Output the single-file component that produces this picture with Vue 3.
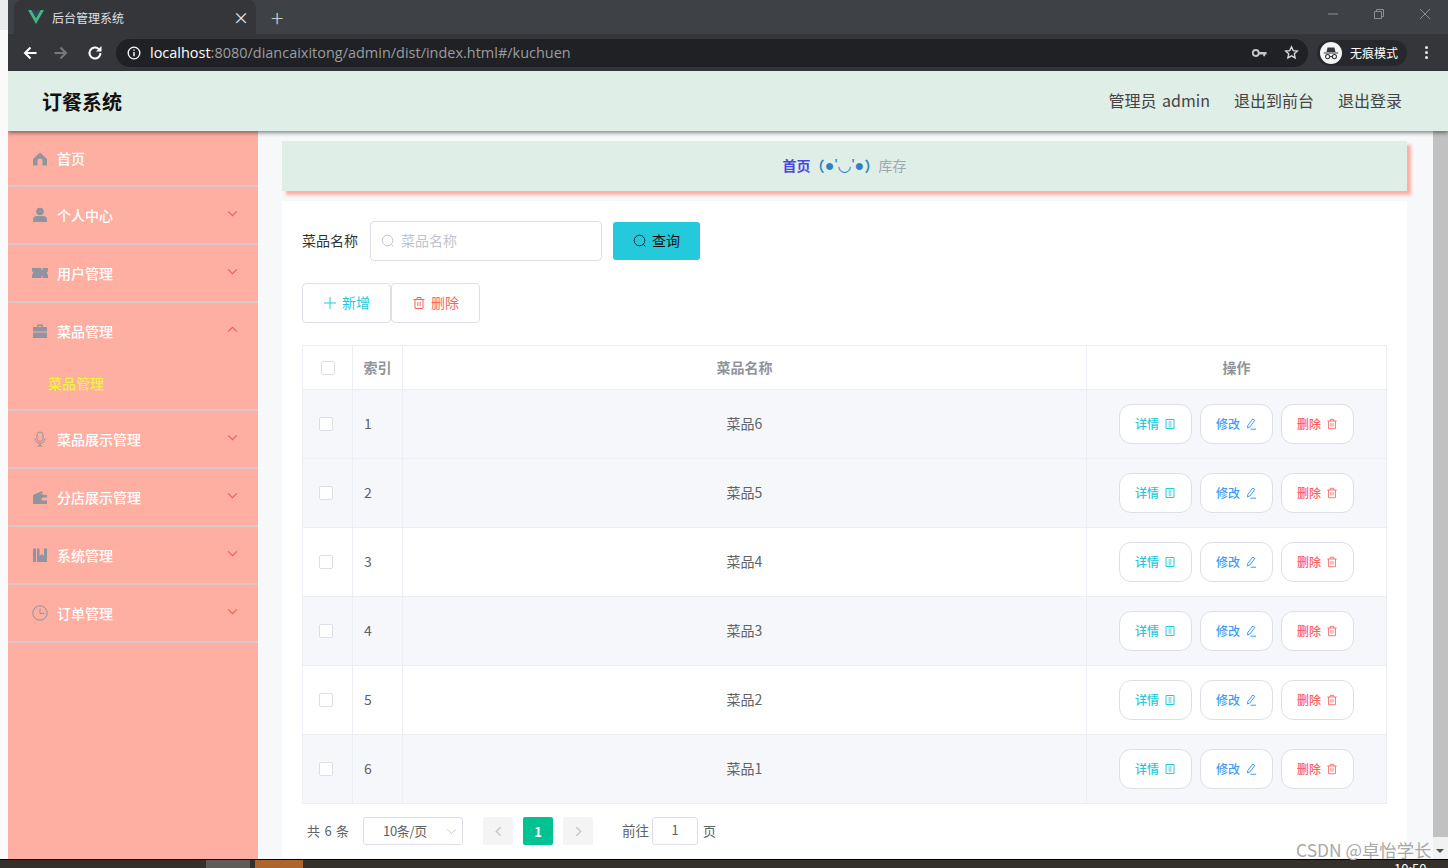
<template>
  <div class="screen">
    <div class="window">
      <!-- browser chrome -->
      <div class="tabstrip">
        <div class="tab">
          <svg class="tab-logo" viewBox="0 0 24 21" width="16" height="14">
            <path d="M0 0h5l7 12L19 0h5L12 21z" fill="#41b883" />
            <path d="M5 0h4.500l2.500 4.500L14.500 0H19l-7 12z" fill="#35495e" />
          </svg>
          <span class="tab-title">后台管理系统</span>
          <span class="tab-close">×</span>
        </div>
        <span class="tab-new">+</span>
        <div class="win-controls">
          <svg viewBox="0 0 12 12" width="12" height="12"><path d="M1 6h10" stroke="#8b8e92" fill="none" /></svg>
          <svg viewBox="0 0 12 12" width="12" height="12"><path d="M1.500 3.500h7v7h-7zM3.500 3.500v-2h7v7h-2" stroke="#8b8e92" fill="none" /></svg>
          <svg viewBox="0 0 12 12" width="12" height="12"><path d="M1 1l10 10M11 1L1 11" stroke="#8b8e92" fill="none" /></svg>
        </div>
      </div>
      <div class="toolbar">
        <svg class="nav-icon" viewBox="0 0 16 16" width="16" height="16"><path d="M14.500 8H3M8.500 2.500L3 8l5.500 5.500" stroke="#fff" stroke-width="2" fill="none" /></svg>
        <svg class="nav-icon" viewBox="0 0 16 16" width="16" height="16"><path d="M1.500 8H13M7.500 2.500L13 8l-5.500 5.500" stroke="#77797c" stroke-width="2" fill="none" /></svg>
        <svg class="nav-icon" viewBox="0 0 16 16" width="16" height="16"><path d="M13.500 8a5.500 5.500 0 1 1-1.600-3.900" stroke="#fff" stroke-width="2" fill="none" /><path d="M14.500 1v5.500H9z" fill="#fff" /></svg>
        <div class="omnibox">
          <svg viewBox="0 0 14 14" width="14" height="14"><circle cx="7" cy="7" r="5.800" stroke="#fff" stroke-width="1.300" fill="none" /><path d="M7 6v4.200M7 3.500v1.300" stroke="#fff" stroke-width="1.400" /></svg>
          <span class="url"><b>localhost</b>:8080/diancaixitong/admin/dist/index.html#/kuchuen</span>
          <svg class="key" viewBox="0 0 16 10" width="15" height="10"><circle cx="4" cy="5" r="3.200" fill="none" stroke="#c4c6c9" stroke-width="2" /><path d="M7 4h8.500v2.500h-1.500v2h-2v-2H7z" fill="#c4c6c9" /></svg>
          <svg class="star" viewBox="0 0 16 16" width="15" height="15"><path d="M8 1.800l1.900 4.100 4.400.5-3.300 3 .9 4.400L8 11.600l-3.900 2.200.9-4.400-3.300-3 4.400-.5z" stroke="#dcdde0" stroke-width="1.400" fill="none" /></svg>
        </div>
        <div class="incognito">
          <span class="incognito-face">
            <svg viewBox="0 0 20 20" width="18" height="18">
              <path d="M2 9.500h16v1H2zM5 9l1.200-5h7.600L15 9z" fill="#33363a" />
              <circle cx="6.200" cy="14" r="2.300" stroke="#33363a" stroke-width="1.200" fill="none" />
              <circle cx="13.800" cy="14" r="2.300" stroke="#33363a" stroke-width="1.200" fill="none" />
              <path d="M8.500 14h3" stroke="#33363a" stroke-width="1.200" />
            </svg>
          </span>
          <span class="incognito-text">无痕模式</span>
        </div>
        <div class="menu-dots"><i></i><i></i><i></i></div>
      </div>

      <!-- app header -->
      <header class="top">
        <div class="brand">订餐系统</div>
        <nav class="top-links">
          <span>管理员 admin</span>
          <span>退出到前台</span>
          <span>退出登录</span>
        </nav>
      </header>

      <div class="body">
        <aside class="side">
          <template v-for="item in menu" :key="item.label">
            <div class="side-item" :class="{ open: item.sub }">
              <div class="side-row">
                <svg class="side-icon" viewBox="0 0 16 16" width="16" height="16" v-html="item.icon"></svg>
                <span>{{ item.label }}</span>
                <svg v-if="item.arrow" class="side-arrow" viewBox="0 0 12 8" width="11" height="7">
                  <path :d="item.sub ? 'M1 6.500l5-5 5 5' : 'M1 1.500l5 5 5-5'" stroke="#f7584e" stroke-width="1.200" fill="none" />
                </svg>
              </div>
              <div v-if="item.sub" class="side-sub">{{ item.sub }}</div>
            </div>
          </template>
        </aside>

        <main class="main">
          <div class="crumb">
            <span class="crumb-home">首页</span>
            <span class="crumb-face">（<span class="face-in">●'◡'●</span>）</span>
            <span class="crumb-cur">库存</span>
          </div>

          <section class="card">
            <div class="search">
              <label>菜品名称</label>
              <div class="search-input">
                <svg viewBox="0 0 14 14" width="14" height="14"><circle cx="6.500" cy="6.500" r="5.300" stroke="#c0c4cc" fill="none" /><path d="M10.500 10.500l2 2" stroke="#c0c4cc" /></svg>
                <span>菜品名称</span>
              </div>
              <button class="search-btn">
                <svg viewBox="0 0 14 14" width="14" height="14"><circle cx="6.500" cy="6.500" r="5.300" stroke="#1b2a35" fill="none" /><path d="M10.500 10.500l2 2" stroke="#1b2a35" /></svg>
                <span>查询</span>
              </button>
            </div>

            <div class="actions">
              <button class="act act-add">
                <svg viewBox="0 0 14 14" width="14" height="14"><path d="M7 1v12M1 7h12" stroke="#25c9dc" fill="none" /></svg>
                <span>新增</span>
              </button>
              <button class="act act-del">
                <svg viewBox="0 0 14 14" width="14" height="14"><path :d="trash" stroke="#ff5f5f" fill="none" /></svg>
                <span>删除</span>
              </button>
            </div>

            <table class="grid">
              <colgroup>
                <col style="width: 50px" /><col style="width: 50px" /><col /><col style="width: 300px" />
              </colgroup>
              <thead>
                <tr>
                  <th><span class="check"></span></th>
                  <th class="lift">索引</th>
                  <th class="lift">菜品名称</th>
                  <th class="lift">操作</th>
                </tr>
              </thead>
              <tbody>
                <tr v-for="row in rows" :key="row.index" :class="{ shade: row.shade }">
                  <td><span class="check check-row"></span></td>
                  <td class="idx lift">{{ row.index }}</td>
                  <td class="center lift">{{ row.name }}</td>
                  <td>
                    <div class="ops">
                      <button class="op op-view">
                        <span>详情</span>
                        <svg viewBox="0 0 12 12" width="12" height="12"><path d="M2 1.500h8v9H2zM4.500 4h3M4.500 6h3M4.500 8h3" stroke="#25c9dc" fill="none" /></svg>
                      </button>
                      <button class="op op-edit">
                        <span>修改</span>
                        <svg viewBox="0 0 12 12" width="12" height="12"><path d="M7.800 1l2 1.500-5 6.500-2.300 1 .3-2.500zM5.500 11.200H11" stroke="#3f9cf0" fill="none" /></svg>
                      </button>
                      <button class="op op-del">
                        <span>删除</span>
                        <svg viewBox="0 0 14 14" width="12" height="12"><path :d="trash" stroke="#ff5f5f" fill="none" /></svg>
                      </button>
                    </div>
                  </td>
                </tr>
              </tbody>
            </table>

            <div class="pager">
              <span class="total">共 6 条</span>
              <div class="size">
                <span>10条/页</span>
                <svg viewBox="0 0 12 8" width="11" height="7"><path d="M1 1.500l5 5 5-5" stroke="#c0c4cc" fill="none" /></svg>
              </div>
              <span class="pg pg-prev"><svg viewBox="0 0 8 12" width="7" height="11"><path d="M6.500 1L1.500 6l5 5" stroke="#c0c4cc" stroke-width="1.600" fill="none" /></svg></span>
              <span class="pg pg-on">1</span>
              <span class="pg"><svg viewBox="0 0 8 12" width="7" height="11"><path d="M1.500 1l5 5-5 5" stroke="#c0c4cc" stroke-width="1.600" fill="none" /></svg></span>
              <span class="jump">前往</span>
              <span class="jump-box">1</span>
              <span class="jump-end">页</span>
            </div>
          </section>
        </main>

        <div class="scrollbar"><div class="thumb"></div></div>
      </div>
    </div>

    <div class="taskbar">
      <i class="task-grey"></i>
      <i class="task-orange"></i>
      <span class="clock">10:50</span>
    </div>
    <div class="watermark">CSDN @卓怡学长</div>
    <span class="scroll-down"></span>
  </div>
</template>

<script setup>
const trash = 'M1.500 3.500h11M3 3.500v9h8v-9M5 3.500V1.500h4v2M5.800 6v4M8.200 6v4'

const menu = [
  { label: '首页', icon: '<path d="M8 1.500L1 8v6.500h4.500V10a2.500 2.500 0 0 1 5 0v4.500H15V8z" fill="#8f949e"/>' },
  { label: '个人中心', arrow: true, icon: '<circle cx="8" cy="4.500" r="3.800" fill="#8f949e"/><path d="M1 15v-2.500C1 10 3 9 5 9h6c2 0 4 1 4 3.500V15z" fill="#8f949e"/>' },
  { label: '用户管理', arrow: true, icon: '<path d="M0 3h9.500v2h1V3H16v3.200a2 2 0 0 0 0 3.600V13h-5.500v-2h-1v2H0V9.800a2 2 0 0 0 0-3.600zM9.500 6.500h1v3h-1z" fill="#8f949e"/>' },
  { label: '菜品管理', arrow: true, sub: '菜品管理', icon: '<path d="M5 4V1.500h6V4h4v4.500H1V4zM6.500 3v1h3V3zM1 9.500h14V15H1z" fill="#8f949e"/>' },
  { label: '菜品展示管理', arrow: true, icon: '<rect x="5" y="1" width="6" height="9.500" rx="3" stroke="#8f949e" fill="none"/><path d="M3 7.500a5 5 0 0 0 10 0M8 12.500V15M5.500 15h5" stroke="#8f949e" fill="none"/>' },
  { label: '分店展示管理', arrow: true, icon: '<path d="M1 6l9-4 1 2.500h-3L12 6h3v2.500h-4a1.500 1.500 0 0 0 0 3h4V15H1z" fill="#8f949e"/>' },
  { label: '系统管理', arrow: true, icon: '<path d="M1 1.500h3V15H1zM5 1.500h2.500V9L10 7l2 2V1.500h3V15H5z" fill="#8f949e"/>' },
  { label: '订单管理', arrow: true, icon: '<circle cx="8" cy="8" r="7.200" stroke="#8f949e" fill="none"/><path d="M8 3.500V8.500h4.500" stroke="#8f949e" fill="none"/>' }
]

const rows = [
  { index: 1, name: '菜品6', shade: true },
  { index: 2, name: '菜品5', shade: true },
  { index: 3, name: '菜品4', shade: false },
  { index: 4, name: '菜品3', shade: true },
  { index: 5, name: '菜品2', shade: false },
  { index: 6, name: '菜品1', shade: true }
]
</script>

<style>
html, body {
  margin: 0;
  overflow: hidden;
}
</style>

<style scoped>
.screen {
  position: relative;
  width: 1448px;
  height: 868px;
  overflow: hidden;
  display: flex;
  flex-direction: column;
  background: linear-gradient(#ebebed 30px, #fafafa 30px);
  font-family: "Noto Sans CJK SC", "Noto Sans", sans-serif;
}

.window {
  flex: 1;
  min-height: 0;
  margin-left: 8px;
  display: flex;
  flex-direction: column;
  overflow: hidden;
}

/* browser chrome */
.tabstrip {
  height: 34px;
  background: #3e4145;
  display: flex;
  align-items: flex-end;
  color: #e8eaed;
}

.tab {
  width: 242px;
  height: 34px;
  margin-left: 6px;
  padding: 0 8px 0 14px;
  box-sizing: border-box;
  background: #35363a;
  border-radius: 8px 8px 0 0;
  display: flex;
  align-items: center;
}

.tab-logo {
  margin-right: 8px;
}

.tab-title {
  flex: 1;
  font-size: 12px;
  color: #dfe1e4;
}

.tab-close {
  font-size: 16px;
  color: #e8eaed;
  margin-right: -1px;
}

.tab-new {
  font-size: 23px;
  line-height: 34px;
  margin-left: 15px;
  color: #c8cacd;
  font-weight: 300;
}

.win-controls {
  margin-left: auto;
  height: 34px;
  display: flex;
  align-items: center;
  gap: 34px;
  padding-right: 17px;
  padding-bottom: 6px;
  box-sizing: border-box;
}

.toolbar {
  height: 37px;
  background: #35363a;
  display: flex;
  align-items: center;
}

.nav-icon {
  margin-left: 15px;
}

.nav-icon:first-child {
  margin-left: 14px;
}

.nav-icon:nth-child(3) {
  margin-left: 18px;
}

.omnibox {
  width: 1192px;
  height: 28px;
  margin-left: 13px;
  padding: 0 9px 0 11px;
  box-sizing: border-box;
  border-radius: 14px;
  background: #202124;
  display: flex;
  align-items: center;
}

.url {
  flex: 1;
  margin-left: 9px;
  font-family: "Open Sans", "Noto Sans", sans-serif;
  font-size: 14.470px;
  color: #9a9da1;
  white-space: nowrap;
}

.url b {
  font-weight: 400;
  color: #fff;
}

.key {
  margin-right: 17px;
}

.incognito {
  width: 90px;
  height: 26px;
  margin-left: 9px;
  border-radius: 13px;
  background: #27282c;
  display: flex;
  align-items: center;
  box-sizing: border-box;
  padding-left: 3px;
}

.incognito-face {
  width: 22px;
  height: 22px;
  border-radius: 50%;
  background: #f4f4f5;
  display: flex;
  align-items: center;
  justify-content: center;
}

.incognito-text {
  margin-left: 8px;
  font-size: 12px;
  color: #fff;
}

.menu-dots {
  margin-left: 18px;
  display: flex;
  flex-direction: column;
  gap: 2px;
}

.menu-dots i {
  width: 3px;
  height: 3px;
  border-radius: 50%;
  background: #e8eaed;
}

/* app header */
.top {
  position: relative;
  z-index: 2;
  height: 60px;
  padding: 0 46px 0 34px;
  background: #dfeee7;
  box-shadow: 0 2px 4px rgba(0, 0, 0, 0.45);
  display: flex;
  align-items: center;
  justify-content: space-between;
}

.brand {
  font-size: 20px;
  font-weight: 700;
  color: #111;
}

.top-links {
  display: flex;
  gap: 24px;
  font-size: 16px;
  color: #444;
  padding-bottom: 2px;
  word-spacing: 2px;
}

.body {
  flex: 1;
  min-height: 0;
  display: flex;
}

/* sidebar */
.side {
  width: 250px;
  flex-shrink: 0;
  background: #ffaea2;
}

.side-item {
  border-bottom: 2px solid #d6c8c6;
}

.side-item:first-child .side-row {
  height: 54px;
  padding-top: 2px;
}

.side-row {
  height: 56px;
  box-sizing: border-box;
  padding: 0 20px 0 24px;
  display: flex;
  align-items: center;
  gap: 9px;
  font-size: 14px;
  font-weight: 500;
  color: #fff;
}

.side-row span {
  flex: 1;
  margin-bottom: 1px;
}

.side-item:first-child .side-row span {
  margin-bottom: 2px;
}

.side-arrow {
  margin-top: -4px;
}

.side-sub {
  height: 50px;
  box-sizing: border-box;
  padding-left: 40px;
  padding-top: 1px;
  line-height: 46px;
  font-size: 14px;
  font-weight: 500;
  color: #f1f33c;
}

/* main */
.main {
  flex: 1;
  min-width: 0;
  padding: 10px 26px 0 24px;
  background: #f7f8fa;
}

.crumb {
  height: 50px;
  background: #dfeee7;
  box-shadow: 4px 4px 3px #ffaea2;
  display: flex;
  align-items: center;
  justify-content: center;
  font-size: 14px;
  font-weight: 700;
  padding-bottom: 3px;
  box-sizing: border-box;
}

.crumb-home {
  color: #4a45e0;
}

.crumb-face {
  color: #2f7fc4;
}

.face-in {
  display: inline-block;
  width: 40px;
  text-align: center;
  white-space: nowrap;
  font-family: "Liberation Sans", "DejaVu Sans", sans-serif;
  font-weight: 400;
  font-size: 16px;
  line-height: 14px;
}

.crumb-cur {
  color: #a0a6b0;
  font-weight: 400;
}

.card {
  margin-top: 10px;
  height: 657px;
  padding: 20px;
  box-sizing: border-box;
  background: #fff;
}

.search {
  display: flex;
  align-items: center;
  height: 40px;
  font-size: 14px;
  color: #333;
}

.search label {
  width: 68px;
  flex-shrink: 0;
  margin-bottom: 2px;
}

.search-input {
  width: 232px;
  height: 40px;
  padding-left: 10px;
  box-sizing: border-box;
  border: 1px solid #dcdfe6;
  border-radius: 4px;
  display: flex;
  align-items: center;
  gap: 6px;
  color: #c0c4cc;
}

.search-input span,
.search-btn span,
.act span,
.op span {
  margin-bottom: 2px;
}

.search-btn {
  margin-left: 11px;
  width: 87px;
  height: 38px;
  border: 0;
  border-radius: 3px;
  background: #25c9dc;
  color: #111;
  font: inherit;
  display: flex;
  align-items: center;
  justify-content: center;
  gap: 5px;
  padding: 0;
}

.actions {
  display: flex;
  margin-top: 22px;
}

.act {
  width: 89px;
  height: 40px;
  background: #fff;
  border: 1px solid #dcdfe6;
  border-radius: 4px;
  font-family: inherit;
  font-size: 14px;
  display: flex;
  align-items: center;
  justify-content: center;
  gap: 5px;
  padding: 0;
}

.act-add {
  color: #25c9dc;
}

.act-del {
  color: #ff5f5f;
}

.grid {
  width: 1085px;
  margin-top: 22px;
  border-collapse: collapse;
  table-layout: fixed;
  font-size: 14px;
  color: #606266;
}

.grid th,
.grid td {
  border: 1px solid #ebeef5;
  padding: 0;
  box-sizing: border-box;
}

.grid th {
  height: 44px;
  font-weight: 700;
  color: #909399;
  text-align: center;
}

.grid td {
  height: 69px;
}

.grid .lift {
  padding-bottom: 2px;
}

.grid .shade td {
  background: #f5f7fb;
}

.center {
  text-align: center;
}

.grid .idx {
  padding-left: 11px;
}

.check {
  display: block;
  margin: 0 auto;
  width: 14px;
  height: 14px;
  background: #fff;
  border: 1px solid #dcdfe6;
  border-radius: 2px;
  box-sizing: border-box;
}

.check-row {
  position: relative;
  left: -2px;
}

.ops {
  display: flex;
  justify-content: center;
  gap: 8px;
}

.op {
  width: 73px;
  height: 40px;
  padding: 0;
  background: #fff;
  border: 1px solid #dcdfe6;
  border-radius: 12px;
  font-family: inherit;
  font-size: 12px;
  font-weight: 500;
  display: flex;
  align-items: center;
  justify-content: center;
  gap: 5px;
}

.op-view {
  color: #25c9dc;
}

.op-edit {
  color: #3f9cf0;
}

.op-del {
  color: #ff5f5f;
}

/* pagination */
.pager {
  display: flex;
  align-items: center;
  margin-top: 13px;
  height: 28px;
  font-size: 13px;
  color: #606266;
}

.pager > span,
.size span {
  padding-bottom: 2px;
  box-sizing: border-box;
}

.total {
  margin-left: 5px;
  width: 56px;
  word-spacing: 1.500px;
}

.size {
  width: 100px;
  height: 28px;
  box-sizing: border-box;
  border: 1px solid #dcdfe6;
  border-radius: 3px;
  display: flex;
  align-items: center;
  padding: 0 5px 0 19px;
  justify-content: space-between;
  letter-spacing: -0.300px;
}

.pg {
  width: 30px;
  height: 28px;
  margin-left: 10px;
  background: #f4f4f5;
  border-radius: 2px;
  display: flex;
  align-items: center;
  justify-content: center;
}

.pager > .pg {
  padding-bottom: 0;
}

.pg-prev {
  margin-left: 20px;
}

.pg-on {
  background: #00c292;
  color: #fff;
  font-weight: 700;
}

.jump {
  margin-left: 29px;
  font-size: 13.500px;
}

.pager > .jump-box {
  width: 46px;
  height: 28px;
  margin-left: 3px;
  padding-bottom: 0;
  border: 1px solid #dcdfe6;
  border-radius: 3px;
  text-align: center;
  line-height: 24px;
}

.jump-end {
  margin-left: 5px;
}

.scrollbar {
  width: 15px;
  flex-shrink: 0;
  background: #f1f1f1;
}

.thumb {
  height: 706px;
  background: #c1c1c1;
}

/* desktop strip */
.taskbar {
  position: relative;
  height: 9px;
  flex-shrink: 0;
  background: #34302b;
  border-top: 1px solid #000;
  box-sizing: border-box;
  overflow: hidden;
}

.task-grey {
  position: absolute;
  left: 206px;
  top: 0;
  width: 44px;
  height: 8px;
  background: #5e5c58;
}

.task-orange {
  position: absolute;
  left: 255px;
  top: 0;
  width: 48px;
  height: 8px;
  background: #ac662c;
}

.clock {
  position: absolute;
  left: 1394px;
  top: 1px;
  font-size: 13px;
  line-height: 16px;
  color: #fff;
}

.watermark {
  position: absolute;
  left: 1296px;
  top: 840px;
  font-size: 17.400px;
  line-height: 20px;
  color: #a8a8a8;
  white-space: nowrap;
}

.scroll-down {
  position: absolute;
  left: 1436px;
  top: 849px;
  border: 4px solid transparent;
  border-top: 4px solid #505050;
}
</style>
